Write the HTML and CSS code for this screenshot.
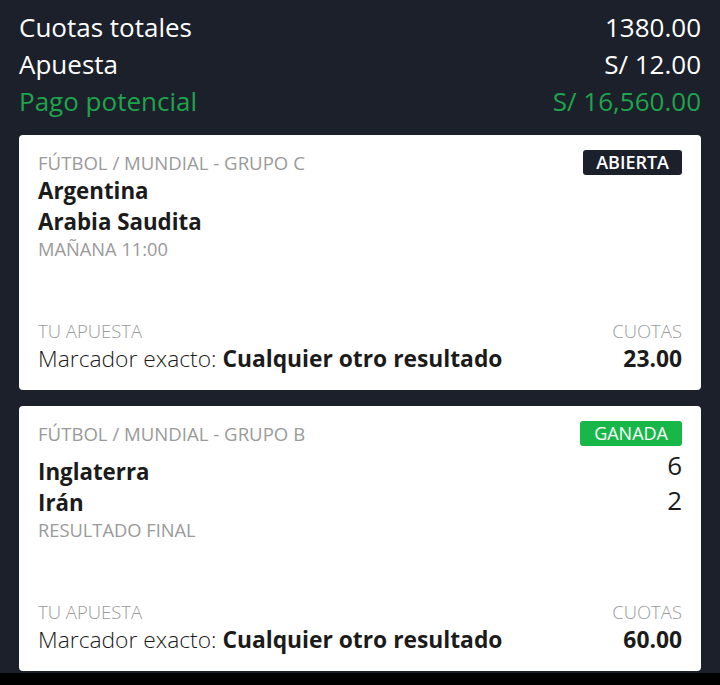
FILE: index.html
```html
<!DOCTYPE html>
<html lang="es">
<head>
<meta charset="utf-8">
<title>Apuesta</title>
<link rel="stylesheet" href="styles.css">
</head>
<body>
<div class="screen">
  <section class="summary">
    <div class="sum-row"><span>Cuotas totales</span><span>1380.00</span></div>
    <div class="sum-row"><span>Apuesta</span><span>S/ 12.00</span></div>
    <div class="sum-row green"><span>Pago potencial</span><span>S/ 16,560.00</span></div>
  </section>

  <section class="card">
    <div class="card-head">
      <span class="category">FÚTBOL / MUNDIAL - GRUPO C</span>
      <span class="badge dark">ABIERTA</span>
    </div>
    <div class="teams">
      <div class="names">
        <div class="team">Argentina</div>
        <div class="team">Arabia Saudita</div>
      </div>
    </div>
    <div class="status">MAÑANA 11:00</div>
    <div class="bet">
      <div class="bet-labels"><span>TU APUESTA</span><span>CUOTAS</span></div>
      <div class="bet-values"><span>Marcador exacto: <b>Cualquier otro resultado</b></span><b>23.00</b></div>
    </div>
  </section>

  <section class="card">
    <div class="card-head">
      <span class="category">FÚTBOL / MUNDIAL - GRUPO B</span>
      <span class="badge green-bg">GANADA</span>
    </div>
    <div class="teams">
      <div class="names scored">
        <div class="team">Inglaterra</div>
        <div class="team">Irán</div>
      </div>
      <div class="scores">
        <div>6</div>
        <div>2</div>
      </div>
    </div>
    <div class="status">RESULTADO FINAL</div>
    <div class="bet">
      <div class="bet-labels"><span>TU APUESTA</span><span>CUOTAS</span></div>
      <div class="bet-values"><span>Marcador exacto: <b>Cualquier otro resultado</b></span><b>60.00</b></div>
    </div>
  </section>
</div>
</body>
</html>
```

FILE: styles.css
```css
html, body {
  margin: 0;
  padding: 0;
  background: #000;
}
body {
  font-family: "Open Sans", "Noto Sans", sans-serif;
  color: #1b1b1b;
}
.screen {
  background: #1c202a;
  height: 673px;
  padding: 9px 19px 0 19px;
  box-sizing: border-box;
}
.summary {
  display: flex;
  flex-direction: column;
}
.sum-row {
  display: flex;
  justify-content: space-between;
  font-size: 26px;
  line-height: 37px;
  color: #ffffff;
}
.sum-row.green {
  color: #1ea44c;
}
.card {
  background: #ffffff;
  border-radius: 4px;
  margin-top: 15px;
  padding: 15px 19px 16px 19px;
}
.card + .card {
  margin-top: 16px;
}
.card-head {
  display: flex;
  justify-content: space-between;
  align-items: center;
  height: 25px;
}
.category {
  font-size: 18.6px;
  color: #9a9a9a;
}
.badge {
  font-size: 18px;
  line-height: 25px;
  padding: 0 13px;
  border-radius: 3px;
  color: #fff;
}
.badge.dark {
  background: #1c202a;
  font-weight: 600;
}
.badge.green-bg {
  background: #17b847;
  font-weight: 500;
  padding: 0 14px;
}
.teams {
  display: flex;
  justify-content: space-between;
}
.names .team {
  font-size: 22.3px;
  font-weight: 700;
  line-height: 31px;
}
.names.scored {
  padding-top: 10px;
}
.scores {
  padding-top: 2px;
  font-size: 26px;
  line-height: 35px;
  text-align: right;
}
.status {
  font-size: 18.3px;
  line-height: 24px;
  color: #9a9a9a;
}
.bet {
  margin-top: 57px;
}
.bet-labels {
  display: flex;
  justify-content: space-between;
  font-size: 18.5px;
  line-height: 26px;
  color: #9a9a9a;
  font-weight: 300;
}
.bet-values {
  display: flex;
  justify-content: space-between;
  font-size: 22.8px;
  line-height: 30px;
  font-weight: 300;
}
.bet-values b {
  font-weight: 700;
}
```
